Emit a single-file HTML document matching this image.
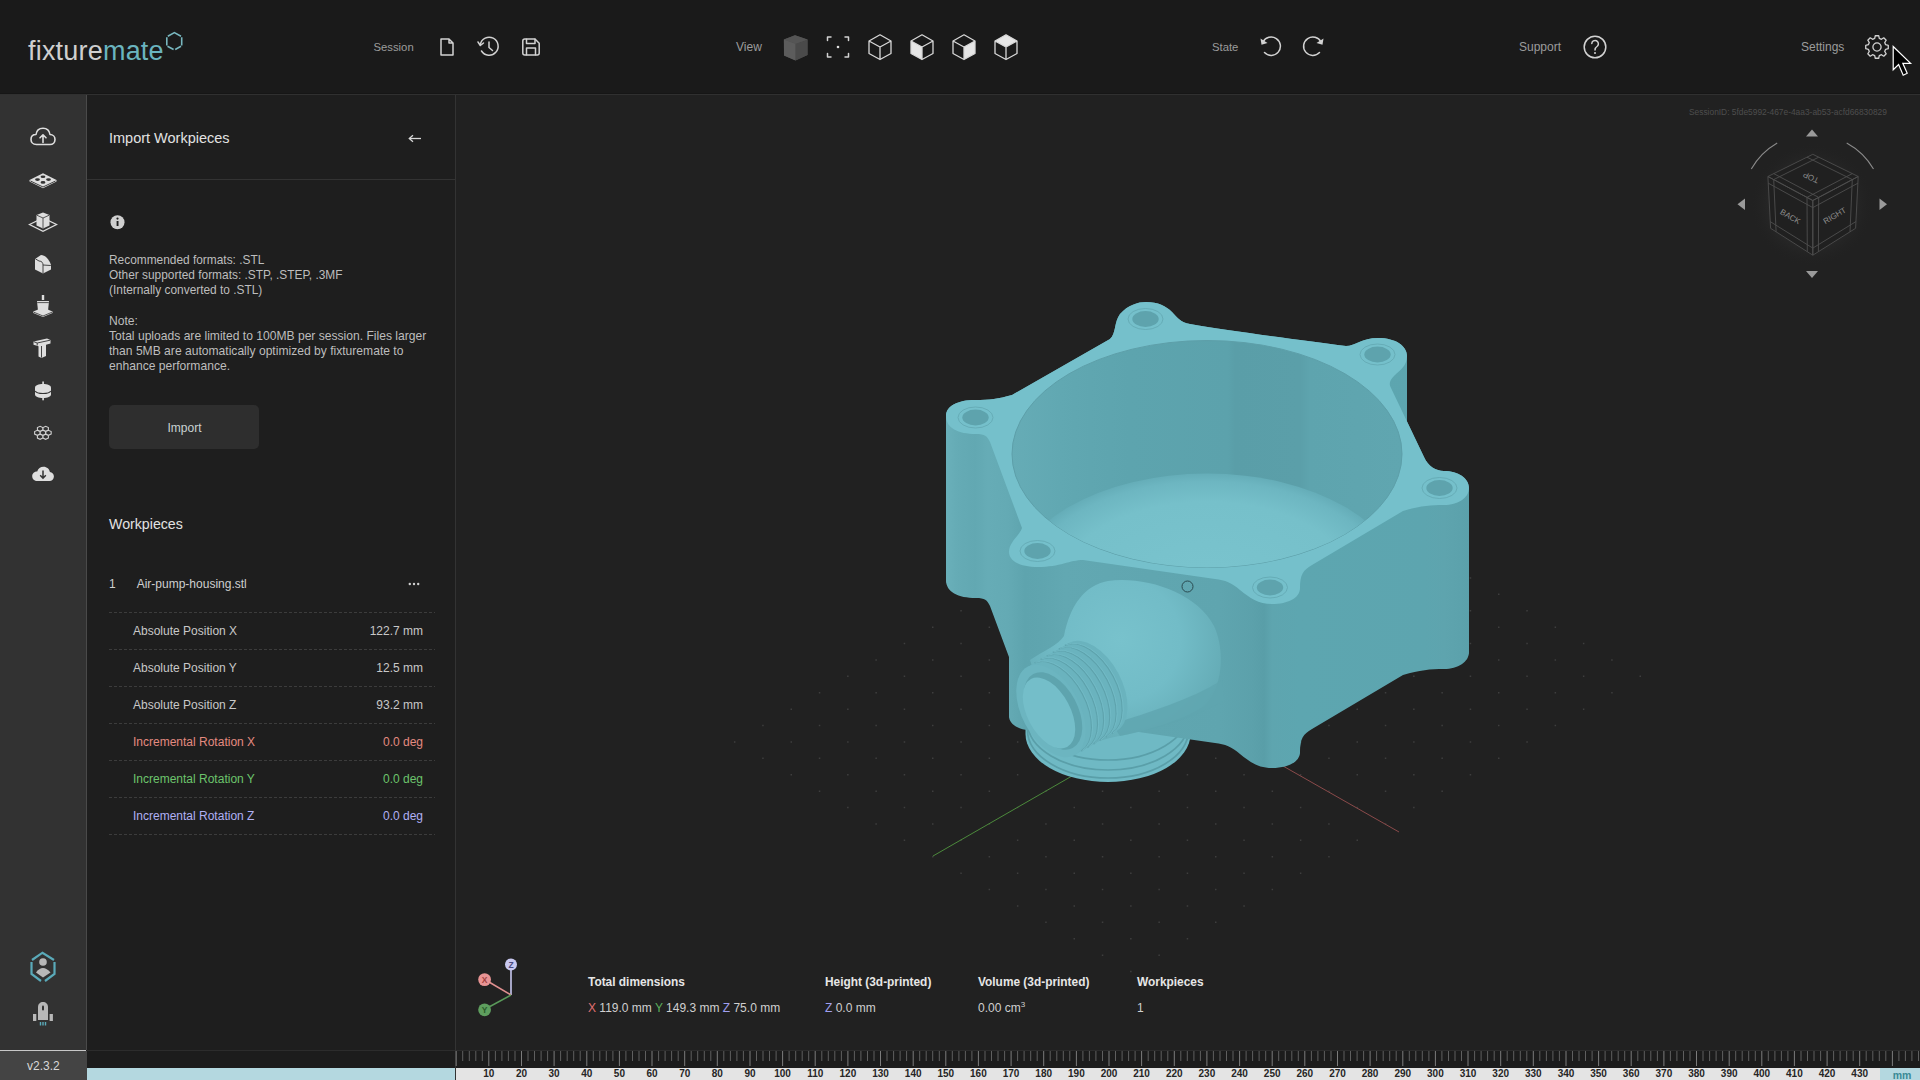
<!DOCTYPE html>
<html><head><meta charset="utf-8"><style>
*{margin:0;padding:0;box-sizing:border-box}
html,body{width:1920px;height:1080px;overflow:hidden;background:#212121;font-family:"Liberation Sans",sans-serif}
.t{position:absolute;white-space:nowrap}
.abs{position:absolute}
svg{position:absolute;overflow:visible}
</style></head>
<body>
<div class="abs" style="left:0;top:0;width:1920px;height:94px;background:#1a1a1a"></div><div class="abs" style="left:0;top:93px;width:1920px;height:1px;background:#161616"></div><div class="abs" style="left:0;top:94px;width:1920px;height:1px;background:#303030"></div><div class="abs" style="left:0;top:95px;width:86px;height:955px;background:#323232"></div><div class="abs" style="left:86px;top:95px;width:1px;height:955px;background:#4a4a4a"></div><div class="abs" style="left:0;top:1050px;width:86px;height:1px;background:#c8c8c8"></div><div class="abs" style="left:0;top:1051px;width:87px;height:29px;background:#444444"></div><div class="abs" style="left:87px;top:95px;width:368px;height:955px;background:#1e1e1e"></div><div class="abs" style="left:87px;top:179px;width:368px;height:1px;background:#333"></div><div class="abs" style="left:455px;top:95px;width:1px;height:985px;background:#333"></div><div class="abs" style="left:87px;top:1050px;width:368px;height:1px;background:#2c2c2c"></div><div class="abs" style="left:87px;top:1051px;width:368px;height:17px;background:#1c1c1c"></div><div class="abs" style="left:87px;top:1068px;width:368px;height:12px;background:#b4d8e0"></div><div class="abs" style="left:456px;top:1050px;width:1464px;height:1px;background:#2c2c2c"></div><div class="abs" style="left:456px;top:1051px;width:1464px;height:17px;background:#1c1c1c"></div><div class="abs" style="left:456px;top:1068px;width:1464px;height:12px;background:#e4e4e4"></div><svg style="left:0;top:0" width="1920" height="94" viewBox="0 0 1920 94">
<!-- logo hex -->
<path d="M167.8,36.3 L174.4,32.6 L181,36.3 M181.7,37.3 V45.4 M181,46.3 L175.2,49.5 M173.6,49.5 L167.5,46.3 M166.8,37.3 V45.4" fill="none" stroke="#78b7bf" stroke-width="1.6"/>
<g fill="none" stroke="#d2d2d2" stroke-width="1.5" stroke-linejoin="round" stroke-linecap="round">
 <!-- file -->
 <path d="M441,39 H449 L453,43 V55 H441 Z M449,39 V43 H453"/>
 <!-- history -->
 <path d="M480.3,44.5 A9,9 0 1 1 481.5,51"/>
 <path d="M478,42 L480.3,45.5 L483.5,43" />
 <path d="M489,42 V47.5 L492.5,50.5"/>
 <!-- save -->
 <path d="M522.8,41 A2,2 0 0 1 524.8,39 H535 L539.2,43.2 V53 A2,2 0 0 1 537.2,55 H524.8 A2,2 0 0 1 522.8,53 Z"/>
 <path d="M526.5,39.2 V43.5 H535 V39.2 M526.5,54.8 V48 H535.5 V54.8"/>
 <!-- focus -->
 <path d="M827.5,40.5 V37 H831 M845,37 H848.5 V40.5 M848.5,53.5 V57 H845 M831,57 H827.5 V53.5"/>
 <!-- undo -->
 <path d="M1263,42 A9.2,9.2 0 1 1 1264.5,52.5"/>
 <!-- redo -->
 <path d="M1321,42 A9.2,9.2 0 1 0 1319.5,52.5"/>
 <!-- help -->
 <circle cx="1595" cy="47" r="10.8"/>
 <path d="M1591.8,43.5 A3.3,3.3 0 1 1 1597.5,46 C1596,47 1595,48 1595,50"/>
</g>
<circle cx="838" cy="47" r="1.3" fill="#e0e0e0"/>
<circle cx="1595" cy="53" r="1" fill="#d2d2d2"/>
<path d="M1260.5,38.5 L1261.5,44.8 L1267.5,43 Z" fill="#d2d2d2"/>
<path d="M1323.5,38.5 L1322.5,44.8 L1316.5,43 Z" fill="#d2d2d2"/>
<!-- gray cube -->
<defs><linearGradient id="gc" x1="0" x2="0" y1="0" y2="1"><stop offset="0" stop-color="#5a5a5a"/><stop offset="1" stop-color="#4a4a4a"/></linearGradient></defs>
<path d="M795,35.2 L807.5,39.5 L807.5,55 L795.5,60.5 L784,55.5 L783.8,39.5 Z" fill="#505050"/>
<path d="M784,39.5 L795.5,43.8 L795.5,60.5 L784,55.5 Z" fill="#5c5c5c"/>
<path d="M795.5,43.8 L807.5,39.5 L807.5,55 L795.5,60.5 Z" fill="#4a4a4a"/>
<path d="M784,39.5 L795,35.2 L807.5,39.5 L795.5,43.8 Z" fill="#555"/>
<!-- wire cubes -->
<g fill="none" stroke="#d8d8d8" stroke-width="1.3" stroke-linejoin="round">
 <path d="M880,34.8 L891,41 V53.5 L880,59.5 L869,53.5 V41 Z M869,41 L880,47 L891,41 M880,47 V59.5"/>
</g>
<path d="M911,41 L922,47 V59.5 L911,53.5 Z" fill="#e6e6e6"/>
<g fill="none" stroke="#d8d8d8" stroke-width="1.3" stroke-linejoin="round">
 <path d="M922,34.8 L933,41 V53.5 L922,59.5 L911,53.5 V41 Z M911,41 L922,47 L933,41 M922,47 V59.5"/>
</g>
<path d="M975,41 L964,47 V59.5 L975,53.5 Z" fill="#e6e6e6"/>
<g fill="none" stroke="#d8d8d8" stroke-width="1.3" stroke-linejoin="round">
 <path d="M964,34.8 L975,41 V53.5 L964,59.5 L953,53.5 V41 Z M953,41 L964,47 L975,41 M964,47 V59.5"/>
</g>
<path d="M995,41 L1006,34.8 L1017,41 L1006,47 Z" fill="#e6e6e6"/>
<g fill="none" stroke="#d8d8d8" stroke-width="1.3" stroke-linejoin="round">
 <path d="M1006,34.8 L1017,41 V53.5 L1006,59.5 L995,53.5 V41 Z M995,41 L1006,47 L1017,41 M1006,47 V59.5"/>
</g>
<!-- gear -->
<g transform="translate(1877,47)">
 <path id="gear" fill="none" stroke="#d2d2d2" stroke-width="1.3" stroke-linejoin="round" d="M8.60,-2.29 L11.27,-1.70 L11.27,1.70 L8.60,2.29 L7.70,4.46 L9.18,6.77 L6.77,9.18 L4.46,7.70 L2.29,8.60 L1.70,11.27 L-1.70,11.27 L-2.29,8.60 L-4.46,7.70 L-6.77,9.18 L-9.18,6.77 L-7.70,4.46 L-8.60,2.29 L-11.27,1.70 L-11.27,-1.70 L-8.60,-2.29 L-7.70,-4.46 L-9.18,-6.77 L-6.77,-9.18 L-4.46,-7.70 L-2.29,-8.60 L-1.70,-11.27 L1.70,-11.27 L2.29,-8.60 L4.46,-7.70 L6.77,-9.18 L9.18,-6.77 L7.70,-4.46 Z"/>
 <circle r="4.1" fill="none" stroke="#d2d2d2" stroke-width="1.3"/>
</g>
<!-- cursor -->
<path d="M1893.2,46.5 L1893.2,69.8 L1898.6,64.6 L1903.2,75.2 L1907.2,73.3 L1902.8,63.3 L1910.6,63.3 Z" fill="#000" stroke="#fff" stroke-width="1.2" stroke-linejoin="miter"/>
</svg>
<svg style="left:0;top:95px" width="86" height="955" viewBox="0 95 86 955">
<g fill="none" stroke="#dedede" stroke-width="1.6" stroke-linejoin="round" stroke-linecap="round">
 <!-- cloud upload -->
 <path d="M36.5,144.5 C32.5,144.5 31,141.5 31,139.5 C31,136.5 33,134.5 36,134.5 C36.5,130.5 39.5,128.2 43,128.2 C47,128.2 49.5,131 50,134.5 C53,134.5 55,136.8 55,139.5 C55,142.5 52.8,144.5 50,144.5 Z"/>
 <path d="M43,142.5 V135 M40,137.8 L43,134.8 L46,137.8"/>
</g>
<g fill="#dedede">
 <!-- plate with holes -->
 <path d="M29.5,180 L43,173.3 L56.5,180 L56.5,181.5 L43,188.3 L29.5,181.5 Z"/>
 <path d="M30.5,181 L43,187 L55.5,181" fill="none" stroke="#323232" stroke-width="0.9"/>
 <ellipse cx="37.5" cy="179.6" rx="2.4" ry="1.3" fill="#323232"/>
 <ellipse cx="48.5" cy="179.6" rx="2.4" ry="1.3" fill="#323232"/>
 <ellipse cx="43" cy="176.8" rx="2.4" ry="1.3" fill="#323232"/>
 <ellipse cx="43" cy="182.4" rx="2.4" ry="1.3" fill="#323232"/>
 <!-- cube on plate -->
 <path d="M29.5,224.5 L43,218 L56.5,224.5 L43,231.3 Z" fill="none" stroke="#dedede" stroke-width="1.3"/>
 <path d="M36.5,215 L43,212.5 L49.5,215 L49.5,225.5 L43,228.5 L36.5,225.5 Z"/>
 <path d="M36.8,215.2 L43,218 L49.2,215.2 M43,218 V228" fill="none" stroke="#323232" stroke-width="0.8"/>
 <!-- wedge -->
 <path d="M35,259 L41,255 C45,255 49,259 51,265 L51,269.5 L43,273.5 L35,269.5 Z"/>
 <path d="M35.3,258.8 L39,261 C42,261 43,263 43,265 V273.3 M43,265 L50.8,265.5" fill="none" stroke="#323232" stroke-width="0.9"/>
 <!-- cup on plate -->
 <rect x="41.8" y="295" width="2.4" height="5"/>
 <path d="M37,301 H49 L48,311 H38 Z"/>
 <path d="M37.2,302.6 H48.8" stroke="#323232" stroke-width="0.8"/>
 <path d="M33.3,311.5 L43,307.5 L52.5,311.5 L52.5,313 L43,317 L33.3,313 Z"/>
 <path d="M33.8,312.2 L43,316 L52,312.2" fill="none" stroke="#323232" stroke-width="0.8"/>
 <!-- T beam -->
 <path d="M33.5,341.5 L47,338.5 L50.5,340 L50.5,343.5 L46,344.8 L46,356 L41.5,358 L38.5,356.5 L38.5,346.3 L33.5,344.8 Z"/>
 <path d="M33.8,341.7 L37.2,343 L50.2,340.2 M37.2,343 V345.5 M41.5,346 V357.6" fill="none" stroke="#323232" stroke-width="0.9"/>
 <!-- disc with axis -->
 <rect x="42.3" y="381.5" width="1.6" height="2.8"/>
 <rect x="42.3" y="397.5" width="1.6" height="2.8"/>
 <path d="M35,387.5 C35,385.5 38.5,384 43,384 C47.5,384 51,385.5 51,387.5 V394.5 C51,396.5 47.5,398 43,398 C38.5,398 35,396.5 35,394.5 Z"/>
 <path d="M35.3,391 C36,392.5 39,393.5 43,393.5 C47,393.5 50,392.5 50.7,391" fill="none" stroke="#323232" stroke-width="1.1"/>
 <!-- cloud download filled -->
 <path d="M37.5,481 C34.5,481 32.2,479 32.2,476.2 C32.2,473.4 34.5,471.6 37.2,471.6 C38,468.5 40.5,466.7 43.5,466.7 C47,466.7 49.4,469 49.9,472 C52.2,472.2 53.9,474 53.9,476.5 C53.9,479 52,481 49.5,481 Z"/>
 <path d="M43,470.5 V478 M40.2,475.3 L43,478.2 L45.8,475.3" fill="none" stroke="#323232" stroke-width="1.5"/>
</g>
<!-- honeycomb -->
<g fill="none" stroke="#cfcfcf" stroke-width="1.1"><path d="M45.58,434.07 L42.90,435.34 L40.22,434.07 L40.22,431.53 L42.90,430.26 L45.58,431.53Z M51.18,434.07 L48.50,435.34 L45.82,434.07 L45.82,431.53 L48.50,430.26 L51.18,431.53Z M48.38,438.05 L45.70,439.32 L43.02,438.05 L43.02,435.51 L45.70,434.23 L48.38,435.51Z M42.78,438.05 L40.10,439.32 L37.42,438.05 L37.42,435.51 L40.10,434.23 L42.78,435.51Z M39.98,434.07 L37.30,435.34 L34.62,434.07 L34.62,431.53 L37.30,430.26 L39.98,431.53Z M42.78,430.09 L40.10,431.37 L37.42,430.09 L37.42,427.55 L40.10,426.28 L42.78,427.55Z M48.38,430.09 L45.70,431.37 L43.02,430.09 L43.02,427.55 L45.70,426.28 L48.38,427.55Z"/></g>
<!-- user hex -->
<g fill="none" stroke="#5aaab9" stroke-width="2.2">
 <path d="M32,960 L42.5,952.7 L54,960"/>
 <path d="M54.5,962 V974 L45,981"/>
 <path d="M41,981 L31.5,974 V962"/>
</g>
<circle cx="43" cy="962" r="3.8" fill="#b8b8b8"/>
<path d="M36,972.5 C38,969.5 40.5,968 43,968 C45.5,968 48,969.5 50.5,972.5 L43,977.5 Z" fill="#b8b8b8"/>
<!-- rocket -->
<path d="M38,1007 C38,1004 40.2,1002 43,1002 C45.8,1002 48,1004 48,1007 V1020 H38 Z" fill="#b8b8b8"/>
<rect x="42" y="1005.5" width="2" height="5" rx="1" fill="#323232"/>
<rect x="33" y="1014" width="3.3" height="7" fill="#b8b8b8"/>
<rect x="49.6" y="1014" width="3.3" height="7" fill="#b8b8b8"/>
<rect x="39.8" y="1022" width="1.4" height="3.5" fill="#5aaab9"/>
<rect x="42.3" y="1022" width="1.4" height="3.5" fill="#5aaab9"/>
<rect x="44.8" y="1022" width="1.4" height="3.5" fill="#5aaab9"/>
</svg>
<svg style="left:87px;top:95px" width="368" height="955" viewBox="87 95 368 955">
<circle cx="117.5" cy="222.2" r="7" fill="#cfcfcf"/>
<rect x="116.6" y="221" width="1.9" height="5" fill="#1e1e1e"/>
<circle cx="117.5" cy="218.6" r="1.1" fill="#1e1e1e"/>
<path d="M409.5,138.5 H421" stroke="#d8d8d8" stroke-width="1.3"/>
<path d="M413,135.3 L409.3,138.5 L413,141.7" stroke="#d8d8d8" stroke-width="1.3" fill="none"/>
<circle cx="409.8" cy="584" r="1.2" fill="#cfcfcf"/>
<circle cx="414" cy="584" r="1.2" fill="#cfcfcf"/>
<circle cx="418.2" cy="584" r="1.2" fill="#cfcfcf"/>
</svg>
<svg style="left:456px;top:95px" width="1464" height="955" viewBox="456 95 1464 955">
<defs>
<pattern id="dots" x="0" y="0" width="28.3" height="32.6" patternUnits="userSpaceOnUse">
<rect x="0" y="0" width="1.2" height="1.2" fill="#3a3a3a"/>
<rect x="14.15" y="16.3" width="1.2" height="1.2" fill="#3a3a3a"/>
</pattern>
</defs>
<path d="M733.9,741.2h1.5v1.5h-1.5zM762.2,724.8h1.5v1.5h-1.5zM790.5,708.4h1.5v1.5h-1.5zM818.8,692.0h1.5v1.5h-1.5zM847.1,675.6h1.5v1.5h-1.5zM875.4,659.2h1.5v1.5h-1.5zM903.7,642.8h1.5v1.5h-1.5zM932.0,626.4h1.5v1.5h-1.5zM960.3,610.0h1.5v1.5h-1.5zM988.6,593.6h1.5v1.5h-1.5zM1016.9,577.2h1.5v1.5h-1.5zM1045.2,560.8h1.5v1.5h-1.5zM1073.5,544.4h1.5v1.5h-1.5zM1101.8,528.0h1.5v1.5h-1.5zM1130.1,511.6h1.5v1.5h-1.5zM1158.4,495.2h1.5v1.5h-1.5zM1186.7,478.8h1.5v1.5h-1.5zM1215.0,462.4h1.5v1.5h-1.5zM1243.3,446.0h1.5v1.5h-1.5zM762.2,757.6h1.5v1.5h-1.5zM790.5,741.2h1.5v1.5h-1.5zM818.8,724.8h1.5v1.5h-1.5zM847.1,708.4h1.5v1.5h-1.5zM875.4,692.0h1.5v1.5h-1.5zM903.7,675.6h1.5v1.5h-1.5zM932.0,659.2h1.5v1.5h-1.5zM960.3,642.8h1.5v1.5h-1.5zM988.6,626.4h1.5v1.5h-1.5zM1016.9,610.0h1.5v1.5h-1.5zM1045.2,593.6h1.5v1.5h-1.5zM1073.5,577.2h1.5v1.5h-1.5zM1101.8,560.8h1.5v1.5h-1.5zM1130.1,544.4h1.5v1.5h-1.5zM1158.4,528.0h1.5v1.5h-1.5zM1186.7,511.6h1.5v1.5h-1.5zM1215.0,495.2h1.5v1.5h-1.5zM1243.3,478.8h1.5v1.5h-1.5zM1271.6,462.4h1.5v1.5h-1.5zM790.5,774.0h1.5v1.5h-1.5zM818.8,757.6h1.5v1.5h-1.5zM847.1,741.2h1.5v1.5h-1.5zM875.4,724.8h1.5v1.5h-1.5zM903.7,708.4h1.5v1.5h-1.5zM932.0,692.0h1.5v1.5h-1.5zM960.3,675.6h1.5v1.5h-1.5zM988.6,659.2h1.5v1.5h-1.5zM1016.9,642.8h1.5v1.5h-1.5zM1045.2,626.4h1.5v1.5h-1.5zM1073.5,610.0h1.5v1.5h-1.5zM1101.8,593.6h1.5v1.5h-1.5zM1130.1,577.2h1.5v1.5h-1.5zM1158.4,560.8h1.5v1.5h-1.5zM1186.7,544.4h1.5v1.5h-1.5zM1215.0,528.0h1.5v1.5h-1.5zM1243.3,511.6h1.5v1.5h-1.5zM1271.6,495.2h1.5v1.5h-1.5zM1299.9,478.8h1.5v1.5h-1.5zM818.8,790.4h1.5v1.5h-1.5zM847.1,774.0h1.5v1.5h-1.5zM875.4,757.6h1.5v1.5h-1.5zM903.7,741.2h1.5v1.5h-1.5zM932.0,724.8h1.5v1.5h-1.5zM960.3,708.4h1.5v1.5h-1.5zM988.6,692.0h1.5v1.5h-1.5zM1016.9,675.6h1.5v1.5h-1.5zM1045.2,659.2h1.5v1.5h-1.5zM1073.5,642.8h1.5v1.5h-1.5zM1101.8,626.4h1.5v1.5h-1.5zM1130.1,610.0h1.5v1.5h-1.5zM1158.4,593.6h1.5v1.5h-1.5zM1186.7,577.2h1.5v1.5h-1.5zM1215.0,560.8h1.5v1.5h-1.5zM1243.3,544.4h1.5v1.5h-1.5zM1271.6,528.0h1.5v1.5h-1.5zM1299.9,511.6h1.5v1.5h-1.5zM1328.2,495.2h1.5v1.5h-1.5zM847.1,806.8h1.5v1.5h-1.5zM875.4,790.4h1.5v1.5h-1.5zM903.7,774.0h1.5v1.5h-1.5zM932.0,757.6h1.5v1.5h-1.5zM960.3,741.2h1.5v1.5h-1.5zM988.6,724.8h1.5v1.5h-1.5zM1016.9,708.4h1.5v1.5h-1.5zM1045.2,692.0h1.5v1.5h-1.5zM1073.5,675.6h1.5v1.5h-1.5zM1101.8,659.2h1.5v1.5h-1.5zM1130.1,642.8h1.5v1.5h-1.5zM1158.4,626.4h1.5v1.5h-1.5zM1186.7,610.0h1.5v1.5h-1.5zM1215.0,593.6h1.5v1.5h-1.5zM1243.3,577.2h1.5v1.5h-1.5zM1271.6,560.8h1.5v1.5h-1.5zM1299.9,544.4h1.5v1.5h-1.5zM1328.2,528.0h1.5v1.5h-1.5zM1356.5,511.6h1.5v1.5h-1.5zM875.4,823.2h1.5v1.5h-1.5zM903.7,806.8h1.5v1.5h-1.5zM932.0,790.4h1.5v1.5h-1.5zM960.3,774.0h1.5v1.5h-1.5zM988.6,757.6h1.5v1.5h-1.5zM1016.9,741.2h1.5v1.5h-1.5zM1045.2,724.8h1.5v1.5h-1.5zM1073.5,708.4h1.5v1.5h-1.5zM1101.8,692.0h1.5v1.5h-1.5zM1130.1,675.6h1.5v1.5h-1.5zM1158.4,659.2h1.5v1.5h-1.5zM1186.7,642.8h1.5v1.5h-1.5zM1215.0,626.4h1.5v1.5h-1.5zM1243.3,610.0h1.5v1.5h-1.5zM1271.6,593.6h1.5v1.5h-1.5zM1299.9,577.2h1.5v1.5h-1.5zM1328.2,560.8h1.5v1.5h-1.5zM1356.5,544.4h1.5v1.5h-1.5zM1384.8,528.0h1.5v1.5h-1.5zM903.7,839.6h1.5v1.5h-1.5zM932.0,823.2h1.5v1.5h-1.5zM960.3,806.8h1.5v1.5h-1.5zM988.6,790.4h1.5v1.5h-1.5zM1016.9,774.0h1.5v1.5h-1.5zM1045.2,757.6h1.5v1.5h-1.5zM1073.5,741.2h1.5v1.5h-1.5zM1101.8,724.8h1.5v1.5h-1.5zM1130.1,708.4h1.5v1.5h-1.5zM1158.4,692.0h1.5v1.5h-1.5zM1186.7,675.6h1.5v1.5h-1.5zM1215.0,659.2h1.5v1.5h-1.5zM1243.3,642.8h1.5v1.5h-1.5zM1271.6,626.4h1.5v1.5h-1.5zM1299.9,610.0h1.5v1.5h-1.5zM1328.2,593.6h1.5v1.5h-1.5zM1356.5,577.2h1.5v1.5h-1.5zM1384.8,560.8h1.5v1.5h-1.5zM1413.1,544.4h1.5v1.5h-1.5zM932.0,856.0h1.5v1.5h-1.5zM960.3,839.6h1.5v1.5h-1.5zM988.6,823.2h1.5v1.5h-1.5zM1016.9,806.8h1.5v1.5h-1.5zM1045.2,790.4h1.5v1.5h-1.5zM1073.5,774.0h1.5v1.5h-1.5zM1101.8,757.6h1.5v1.5h-1.5zM1130.1,741.2h1.5v1.5h-1.5zM1158.4,724.8h1.5v1.5h-1.5zM1186.7,708.4h1.5v1.5h-1.5zM1215.0,692.0h1.5v1.5h-1.5zM1243.3,675.6h1.5v1.5h-1.5zM1271.6,659.2h1.5v1.5h-1.5zM1299.9,642.8h1.5v1.5h-1.5zM1328.2,626.4h1.5v1.5h-1.5zM1356.5,610.0h1.5v1.5h-1.5zM1384.8,593.6h1.5v1.5h-1.5zM1413.1,577.2h1.5v1.5h-1.5zM1441.4,560.8h1.5v1.5h-1.5zM960.3,872.4h1.5v1.5h-1.5zM988.6,856.0h1.5v1.5h-1.5zM1016.9,839.6h1.5v1.5h-1.5zM1045.2,823.2h1.5v1.5h-1.5zM1073.5,806.8h1.5v1.5h-1.5zM1101.8,790.4h1.5v1.5h-1.5zM1130.1,774.0h1.5v1.5h-1.5zM1158.4,757.6h1.5v1.5h-1.5zM1186.7,741.2h1.5v1.5h-1.5zM1215.0,724.8h1.5v1.5h-1.5zM1243.3,708.4h1.5v1.5h-1.5zM1271.6,692.0h1.5v1.5h-1.5zM1299.9,675.6h1.5v1.5h-1.5zM1328.2,659.2h1.5v1.5h-1.5zM1356.5,642.8h1.5v1.5h-1.5zM1384.8,626.4h1.5v1.5h-1.5zM1413.1,610.0h1.5v1.5h-1.5zM1441.4,593.6h1.5v1.5h-1.5zM1469.7,577.2h1.5v1.5h-1.5zM988.6,888.8h1.5v1.5h-1.5zM1016.9,872.4h1.5v1.5h-1.5zM1045.2,856.0h1.5v1.5h-1.5zM1073.5,839.6h1.5v1.5h-1.5zM1101.8,823.2h1.5v1.5h-1.5zM1130.1,806.8h1.5v1.5h-1.5zM1158.4,790.4h1.5v1.5h-1.5zM1186.7,774.0h1.5v1.5h-1.5zM1215.0,757.6h1.5v1.5h-1.5zM1243.3,741.2h1.5v1.5h-1.5zM1271.6,724.8h1.5v1.5h-1.5zM1299.9,708.4h1.5v1.5h-1.5zM1328.2,692.0h1.5v1.5h-1.5zM1356.5,675.6h1.5v1.5h-1.5zM1384.8,659.2h1.5v1.5h-1.5zM1413.1,642.8h1.5v1.5h-1.5zM1441.4,626.4h1.5v1.5h-1.5zM1469.7,610.0h1.5v1.5h-1.5zM1498.0,593.6h1.5v1.5h-1.5zM1016.9,905.2h1.5v1.5h-1.5zM1045.2,888.8h1.5v1.5h-1.5zM1073.5,872.4h1.5v1.5h-1.5zM1101.8,856.0h1.5v1.5h-1.5zM1130.1,839.6h1.5v1.5h-1.5zM1158.4,823.2h1.5v1.5h-1.5zM1186.7,806.8h1.5v1.5h-1.5zM1215.0,790.4h1.5v1.5h-1.5zM1243.3,774.0h1.5v1.5h-1.5zM1271.6,757.6h1.5v1.5h-1.5zM1299.9,741.2h1.5v1.5h-1.5zM1328.2,724.8h1.5v1.5h-1.5zM1356.5,708.4h1.5v1.5h-1.5zM1384.8,692.0h1.5v1.5h-1.5zM1413.1,675.6h1.5v1.5h-1.5zM1441.4,659.2h1.5v1.5h-1.5zM1469.7,642.8h1.5v1.5h-1.5zM1498.0,626.4h1.5v1.5h-1.5zM1526.3,610.0h1.5v1.5h-1.5zM1045.2,921.6h1.5v1.5h-1.5zM1073.5,905.2h1.5v1.5h-1.5zM1101.8,888.8h1.5v1.5h-1.5zM1130.1,872.4h1.5v1.5h-1.5zM1158.4,856.0h1.5v1.5h-1.5zM1186.7,839.6h1.5v1.5h-1.5zM1215.0,823.2h1.5v1.5h-1.5zM1243.3,806.8h1.5v1.5h-1.5zM1271.6,790.4h1.5v1.5h-1.5zM1299.9,774.0h1.5v1.5h-1.5zM1328.2,757.6h1.5v1.5h-1.5zM1356.5,741.2h1.5v1.5h-1.5zM1384.8,724.8h1.5v1.5h-1.5zM1413.1,708.4h1.5v1.5h-1.5zM1441.4,692.0h1.5v1.5h-1.5zM1469.7,675.6h1.5v1.5h-1.5zM1498.0,659.2h1.5v1.5h-1.5zM1526.3,642.8h1.5v1.5h-1.5zM1554.6,626.4h1.5v1.5h-1.5zM1073.5,938.0h1.5v1.5h-1.5zM1101.8,921.6h1.5v1.5h-1.5zM1130.1,905.2h1.5v1.5h-1.5zM1158.4,888.8h1.5v1.5h-1.5zM1186.7,872.4h1.5v1.5h-1.5zM1215.0,856.0h1.5v1.5h-1.5zM1243.3,839.6h1.5v1.5h-1.5zM1271.6,823.2h1.5v1.5h-1.5zM1299.9,806.8h1.5v1.5h-1.5zM1328.2,790.4h1.5v1.5h-1.5zM1356.5,774.0h1.5v1.5h-1.5zM1384.8,757.6h1.5v1.5h-1.5zM1413.1,741.2h1.5v1.5h-1.5zM1441.4,724.8h1.5v1.5h-1.5zM1469.7,708.4h1.5v1.5h-1.5zM1498.0,692.0h1.5v1.5h-1.5zM1526.3,675.6h1.5v1.5h-1.5zM1554.6,659.2h1.5v1.5h-1.5zM1582.9,642.8h1.5v1.5h-1.5zM1101.8,954.4h1.5v1.5h-1.5zM1130.1,938.0h1.5v1.5h-1.5zM1158.4,921.6h1.5v1.5h-1.5zM1186.7,905.2h1.5v1.5h-1.5zM1215.0,888.8h1.5v1.5h-1.5zM1243.3,872.4h1.5v1.5h-1.5zM1271.6,856.0h1.5v1.5h-1.5zM1299.9,839.6h1.5v1.5h-1.5zM1328.2,823.2h1.5v1.5h-1.5zM1356.5,806.8h1.5v1.5h-1.5zM1384.8,790.4h1.5v1.5h-1.5zM1413.1,774.0h1.5v1.5h-1.5zM1441.4,757.6h1.5v1.5h-1.5zM1469.7,741.2h1.5v1.5h-1.5zM1498.0,724.8h1.5v1.5h-1.5zM1526.3,708.4h1.5v1.5h-1.5zM1554.6,692.0h1.5v1.5h-1.5zM1582.9,675.6h1.5v1.5h-1.5zM1611.2,659.2h1.5v1.5h-1.5zM1130.1,970.8h1.5v1.5h-1.5zM1158.4,954.4h1.5v1.5h-1.5zM1186.7,938.0h1.5v1.5h-1.5zM1215.0,921.6h1.5v1.5h-1.5zM1243.3,905.2h1.5v1.5h-1.5zM1271.6,888.8h1.5v1.5h-1.5zM1299.9,872.4h1.5v1.5h-1.5zM1328.2,856.0h1.5v1.5h-1.5zM1356.5,839.6h1.5v1.5h-1.5zM1384.8,823.2h1.5v1.5h-1.5zM1413.1,806.8h1.5v1.5h-1.5zM1441.4,790.4h1.5v1.5h-1.5zM1469.7,774.0h1.5v1.5h-1.5zM1498.0,757.6h1.5v1.5h-1.5zM1526.3,741.2h1.5v1.5h-1.5zM1554.6,724.8h1.5v1.5h-1.5zM1582.9,708.4h1.5v1.5h-1.5zM1611.2,692.0h1.5v1.5h-1.5zM1639.5,675.6h1.5v1.5h-1.5z" fill="#3e3e3e"/>
<!-- axis lines -->
<path d="M933,856 L1072,776" stroke="#4c8a3c" stroke-width="1"/>
<path d="M1283,766 L1399,832" stroke="#8a4a4a" stroke-width="1"/>
<!-- gizmo -->
<g stroke-width="1.6">
<path d="M511,995 V970" stroke="#c8c8f0"/>
<path d="M511,995 L489,982" stroke="#e09090"/>
<path d="M511,995 L489,1007" stroke="#5a9a5a"/>
</g>
<circle cx="511" cy="964.5" r="6" fill="#c8c8f0"/>
<circle cx="484.6" cy="979.6" r="6.4" fill="#e89494"/>
<circle cx="484.6" cy="1009.8" r="6.4" fill="#5e9e5e"/>
<g font-family="Liberation Sans" font-size="8.5" font-weight="700" text-anchor="middle">
<text x="511" y="967.6" fill="#4a4a80">Z</text>
<text x="484.6" y="982.7" fill="#a04040">X</text>
<text x="484.6" y="1012.9" fill="#2a5a2a">Y</text>
</g>
</svg>
<svg style="left:0;top:0" width="1920" height="1080" viewBox="0 0 1920 1080">
<defs>
<path id="tf" d="M946,416 C946,406 958,400 975,400 C990,400 998,399 1012,395 L1110,339 C1116,334 1114,322 1120,314 C1128,305 1138,302 1146,302 C1158,302 1166,306 1172,312 C1178,318 1180,322 1190,324 C1230,331 1300,340 1346,346 C1355,346 1362,338 1378,338 C1396,338 1407,346 1407,356 C1407,366 1400,370 1394,376 C1389,381 1389,385 1391,388 L1424,457 C1428,466 1436,471 1444,471 C1458,471 1469,478 1469,488 C1469,498 1458,505 1444,505 C1430,505 1420,506 1403,511 L1312,565 C1303,570 1300,575 1300,588 C1300,598 1288,604 1272,604 C1258,604 1250,598 1240,590 C1232,583 1225,580 1215,579 L1083,560 C1070,560 1060,567 1038,567 C1020,567 1009,561 1009,552 C1009,542 1020,535 1022,528 L990,442 C987,436 985,434 976,434 C958,434 946,428 946,416 Z"/>
<linearGradient id="gside" x1="946" x2="1469" y1="0" y2="0" gradientUnits="userSpaceOnUse"><stop offset="0.0000" stop-color="#6ab0ba"/><stop offset="0.0229" stop-color="#65abb5"/><stop offset="0.0554" stop-color="#62a8b2"/><stop offset="0.0803" stop-color="#66acb6"/><stop offset="0.1185" stop-color="#64aab4"/><stop offset="0.1511" stop-color="#5ea4ae"/><stop offset="0.1836" stop-color="#5fa5af"/><stop offset="0.2275" stop-color="#62a8b2"/><stop offset="0.3901" stop-color="#60a6b0"/><stop offset="0.5239" stop-color="#5fa5af"/><stop offset="0.5851" stop-color="#5ca1ab"/><stop offset="0.6080" stop-color="#599ea8"/><stop offset="0.6233" stop-color="#5ea5af"/><stop offset="0.6769" stop-color="#5da6b0"/><stop offset="0.9159" stop-color="#5da5af"/><stop offset="0.9541" stop-color="#5ea4ae"/><stop offset="1.0000" stop-color="#5ba1ab"/></linearGradient>
<linearGradient id="gwall" x1="1012" x2="1402" y1="0" y2="0" gradientUnits="userSpaceOnUse"><stop offset="0.0000" stop-color="#66acb6"/><stop offset="0.1231" stop-color="#61a8b2"/><stop offset="0.2000" stop-color="#5fa6b0"/><stop offset="0.3026" stop-color="#5da4ae"/><stop offset="0.5538" stop-color="#5ca2ac"/><stop offset="0.5718" stop-color="#5a9ea8"/><stop offset="0.7385" stop-color="#5b9fa9"/><stop offset="0.7641" stop-color="#5ea4ae"/><stop offset="1.0000" stop-color="#60a6b0"/></linearGradient>
<radialGradient id="gfloor" cx="1207" cy="587" r="195" gradientUnits="userSpaceOnUse" gradientTransform="translate(0,587) scale(1,0.582) translate(0,-587)"><stop offset="0" stop-color="#7ac4ce"/><stop offset="0.75" stop-color="#76c0ca"/><stop offset="0.93" stop-color="#6db6c1"/><stop offset="1" stop-color="#65adb8"/></radialGradient>
<radialGradient id="gdome" cx="1140" cy="630" r="90" gradientUnits="userSpaceOnUse"><stop offset="0" stop-color="#77c1cb"/><stop offset="0.6" stop-color="#6fb9c3"/><stop offset="1" stop-color="#62a9b3"/></radialGradient>
<clipPath id="rim"><ellipse cx="1207" cy="454" rx="195" ry="113.5"/></clipPath>
</defs>
<path d="M1025.5,690 L1025.5,734 A82.5,48 0 0 0 1190.5,734 L1190.5,690 Z" fill="#6fb9c4"/>
<path d="M1027.5,712 A80.5,48 0 0 0 1188.5,712" fill="none" stroke="#5a9fa9" stroke-width="1.7"/>
<path d="M1027.5,722 A80.5,48 0 0 0 1188.5,722" fill="none" stroke="#5a9fa9" stroke-width="1.7"/>
<path d="M1027.5,730 A80.5,48 0 0 0 1188.5,730" fill="none" stroke="#5a9fa9" stroke-width="1.7"/>
<g fill="url(#gside)">
<use href="#tf" y="0"/>
<use href="#tf" y="2"/>
<use href="#tf" y="4"/>
<use href="#tf" y="6"/>
<use href="#tf" y="8"/>
<use href="#tf" y="10"/>
<use href="#tf" y="12"/>
<use href="#tf" y="14"/>
<use href="#tf" y="16"/>
<use href="#tf" y="18"/>
<use href="#tf" y="20"/>
<use href="#tf" y="22"/>
<use href="#tf" y="24"/>
<use href="#tf" y="26"/>
<use href="#tf" y="28"/>
<use href="#tf" y="30"/>
<use href="#tf" y="32"/>
<use href="#tf" y="34"/>
<use href="#tf" y="36"/>
<use href="#tf" y="38"/>
<use href="#tf" y="40"/>
<use href="#tf" y="42"/>
<use href="#tf" y="44"/>
<use href="#tf" y="46"/>
<use href="#tf" y="48"/>
<use href="#tf" y="50"/>
<use href="#tf" y="52"/>
<use href="#tf" y="54"/>
<use href="#tf" y="56"/>
<use href="#tf" y="58"/>
<use href="#tf" y="60"/>
<use href="#tf" y="62"/>
<use href="#tf" y="64"/>
<use href="#tf" y="66"/>
<use href="#tf" y="68"/>
<use href="#tf" y="70"/>
<use href="#tf" y="72"/>
<use href="#tf" y="74"/>
<use href="#tf" y="76"/>
<use href="#tf" y="78"/>
<use href="#tf" y="80"/>
<use href="#tf" y="82"/>
<use href="#tf" y="84"/>
<use href="#tf" y="86"/>
<use href="#tf" y="88"/>
<use href="#tf" y="90"/>
<use href="#tf" y="92"/>
<use href="#tf" y="94"/>
<use href="#tf" y="96"/>
<use href="#tf" y="98"/>
<use href="#tf" y="100"/>
<use href="#tf" y="102"/>
<use href="#tf" y="104"/>
<use href="#tf" y="106"/>
<use href="#tf" y="108"/>
<use href="#tf" y="110"/>
<use href="#tf" y="112"/>
<use href="#tf" y="114"/>
<use href="#tf" y="116"/>
<use href="#tf" y="118"/>
<use href="#tf" y="120"/>
<use href="#tf" y="122"/>
<use href="#tf" y="124"/>
<use href="#tf" y="126"/>
<use href="#tf" y="128"/>
<use href="#tf" y="130"/>
<use href="#tf" y="132"/>
<use href="#tf" y="134"/>
<use href="#tf" y="136"/>
<use href="#tf" y="138"/>
<use href="#tf" y="140"/>
<use href="#tf" y="142"/>
<use href="#tf" y="144"/>
<use href="#tf" y="146"/>
<use href="#tf" y="148"/>
<use href="#tf" y="150"/>
<use href="#tf" y="152"/>
<use href="#tf" y="154"/>
<use href="#tf" y="156"/>
<use href="#tf" y="158"/>
<use href="#tf" y="160"/>
<use href="#tf" y="162"/>
<use href="#tf" y="164"/>
</g>
<use href="#tf" fill="#75c0cb"/>
<ellipse cx="1207" cy="454" rx="195" ry="113.5" fill="url(#gwall)" stroke="#5d9fa9" stroke-width="1"/>
<g clip-path="url(#rim)"><ellipse cx="1207" cy="587" rx="195" ry="113.5" fill="url(#gfloor)"/></g>
<ellipse cx="975.5" cy="417.5" rx="17.5" ry="10.5" fill="none" stroke="#62a7b1" stroke-width="0.8"/>
<ellipse cx="975.5" cy="417.5" rx="13.2" ry="7.9" fill="#5ea3ad"/>
<ellipse cx="1145.5" cy="319" rx="17.5" ry="10.5" fill="none" stroke="#62a7b1" stroke-width="0.8"/>
<ellipse cx="1145.5" cy="319" rx="13.2" ry="7.9" fill="#5ea3ad"/>
<ellipse cx="1377.5" cy="354.5" rx="17.5" ry="10.5" fill="none" stroke="#62a7b1" stroke-width="0.8"/>
<ellipse cx="1377.5" cy="354.5" rx="13.2" ry="7.9" fill="#5ea3ad"/>
<ellipse cx="1439.5" cy="488" rx="17.5" ry="10.5" fill="none" stroke="#62a7b1" stroke-width="0.8"/>
<ellipse cx="1439.5" cy="488" rx="13.2" ry="7.9" fill="#5ea3ad"/>
<ellipse cx="1270" cy="587.5" rx="17.5" ry="10.5" fill="none" stroke="#62a7b1" stroke-width="0.8"/>
<ellipse cx="1270" cy="587.5" rx="13.2" ry="7.9" fill="#5ea3ad"/>
<ellipse cx="1037.5" cy="551" rx="17.5" ry="10.5" fill="none" stroke="#62a7b1" stroke-width="0.8"/>
<ellipse cx="1037.5" cy="551" rx="13.2" ry="7.9" fill="#5ea3ad"/>
<radialGradient id="gpipe" cx="1120" cy="640" r="110" gradientUnits="userSpaceOnUse"><stop offset="0" stop-color="#78c2cc"/><stop offset="0.55" stop-color="#72bcc7"/><stop offset="1" stop-color="#64abb5"/></radialGradient>
<path d="M1030,660 C1045,650 1058,645 1064,636 C1070,605 1085,585 1108,581 C1145,576 1196,592 1214,626 C1226,652 1222,690 1204,706 C1180,722 1140,732 1110,738 L1060,752 Z" fill="url(#gpipe)"/>
<path d="M1112,724 C1150,712 1190,700 1222,680 L1224,700 C1200,716 1160,728 1120,736 Z" fill="#5fa5af" opacity="0.8"/>
<path d="M1027.5,666.9 L1069.3,642.9 L1116.2,731.1 L1074.5,755.1 Z" fill="#6ab3be"/>
<ellipse cx="1092.8" cy="687.0" rx="50" ry="29" transform="rotate(62 1092.8 687.0)" fill="#6ab3be"/>
<path d="M1034.5,662.9 A50,29 62 0 1 1081.4,751.1" fill="none" stroke="#5ea3ad" stroke-width="1.3"/>
<path d="M1035.5,662.4 A50,29 62 0 1 1082.4,750.6" fill="none" stroke="#74bdc8" stroke-width="0.8"/>
<path d="M1040.6,659.4 A50,29 62 0 1 1087.5,747.6" fill="none" stroke="#5ea3ad" stroke-width="1.3"/>
<path d="M1041.6,658.9 A50,29 62 0 1 1088.5,747.1" fill="none" stroke="#74bdc8" stroke-width="0.8"/>
<path d="M1046.7,655.9 A50,29 62 0 1 1093.6,744.1" fill="none" stroke="#5ea3ad" stroke-width="1.3"/>
<path d="M1047.7,655.4 A50,29 62 0 1 1094.6,743.6" fill="none" stroke="#74bdc8" stroke-width="0.8"/>
<path d="M1052.8,652.4 A50,29 62 0 1 1099.7,740.6" fill="none" stroke="#5ea3ad" stroke-width="1.3"/>
<path d="M1053.8,651.9 A50,29 62 0 1 1100.7,740.1" fill="none" stroke="#74bdc8" stroke-width="0.8"/>
<path d="M1058.8,648.9 A50,29 62 0 1 1105.8,737.1" fill="none" stroke="#5ea3ad" stroke-width="1.3"/>
<path d="M1059.8,648.4 A50,29 62 0 1 1106.8,736.6" fill="none" stroke="#74bdc8" stroke-width="0.8"/>
<path d="M1064.9,645.4 A50,29 62 0 1 1111.9,733.6" fill="none" stroke="#5ea3ad" stroke-width="1.3"/>
<path d="M1065.9,644.9 A50,29 62 0 1 1112.9,733.1" fill="none" stroke="#74bdc8" stroke-width="0.8"/>
<ellipse cx="1051.0" cy="711.0" rx="50" ry="29" transform="rotate(62 1051.0 711.0)" fill="#6cb5c0"/>
<ellipse cx="1053.0" cy="711.0" rx="42" ry="24.5" transform="rotate(62 1053.0 711.0)" fill="#5ea4ae"/>
<ellipse cx="1049.0" cy="713.0" rx="38.5" ry="21.5" transform="rotate(62 1049.0 713.0)" fill="#74bec9"/>
<circle cx="1187.5" cy="586.5" r="5.5" fill="none" stroke="#2a4a50" stroke-width="1"/>
</svg><svg style="left:1700px;top:100px" width="220" height="200" viewBox="1700 100 220 200">
<defs><radialGradient id="ncg" cx="1812" cy="205" r="62" gradientUnits="userSpaceOnUse"><stop offset="0" stop-color="#2b2b2b"/><stop offset="0.7" stop-color="#262626"/><stop offset="1" stop-color="#212121" stop-opacity="0"/></radialGradient></defs>
<circle cx="1812" cy="205" r="62" fill="url(#ncg)"/>
<path d="M1812.8,154.3 L1858.2,176.5 L1855.6,228.3 L1812.8,255.2 L1770.6,228.3 L1767.9,176.5 Z" fill="#202020"/>
<g fill="#9a9a9a">
<path d="M1806,136.5 L1812,129.5 L1818,136.5 Z"/>
<path d="M1806,271 L1812,278 L1818,271 Z"/>
<path d="M1745,198.5 L1737.5,204.3 L1745,210 Z"/>
<path d="M1879.5,198.5 L1887,204.3 L1879.5,210 Z"/>
</g>
<g fill="none" stroke="#8a8a8a" stroke-width="1.1">
<path d="M1777.2,143.1 A71,71 0 0 0 1751.3,169"/>
<path d="M1846.7,143.1 A71,71 0 0 1 1873.5,169"/>
</g>
<path d="M1767.9,176.5 L1812.8,154.3 L1858.2,176.5 L1812.8,200.5 Z M1773.7,173.6 L1818.7,197.4 M1773.7,179.6 L1818.7,157.2 M1807.0,157.2 L1852.3,179.6 M1807.0,197.4 L1852.3,173.6 M1767.9,176.5 L1812.8,200.5 L1812.8,255.2 L1770.6,228.3 Z M1773.7,179.6 L1776.1,231.8 M1768.3,183.2 L1812.8,207.6 M1807.0,197.4 L1807.3,251.7 M1770.2,221.6 L1812.8,248.1 M1812.8,200.5 L1858.2,176.5 L1855.6,228.3 L1812.8,255.2 Z M1818.7,197.4 L1818.4,251.7 M1812.8,207.6 L1857.9,183.2 M1852.3,179.6 L1850.0,231.8 M1812.8,248.1 L1855.9,221.6" fill="none" stroke="#4e4e4e" stroke-width="0.9"/>
<g font-family="Liberation Sans" font-size="8" fill="#8c8c8c">
<text transform="translate(1812,175) rotate(205)" text-anchor="middle">TOP</text>
<text transform="translate(1789,219) rotate(30)" text-anchor="middle">BACK</text>
<text transform="translate(1836,218) rotate(-30)" text-anchor="middle">RIGHT</text>
</g>
</svg><svg style="left:456px;top:1050px" width="1464" height="30" viewBox="456 1050 1464 30">
<path d="M462.7,1051 V1061 M469.3,1051 V1061 M475.8,1051 V1061 M482.3,1051 V1061 M495.4,1051 V1061 M501.9,1051 V1061 M508.4,1051 V1061 M515.0,1051 V1061 M528.0,1051 V1061 M534.5,1051 V1061 M541.1,1051 V1061 M547.6,1051 V1061 M560.6,1051 V1061 M567.2,1051 V1061 M573.7,1051 V1061 M580.2,1051 V1061 M593.3,1051 V1061 M599.8,1051 V1061 M606.3,1051 V1061 M612.9,1051 V1061 M625.9,1051 V1061 M632.5,1051 V1061 M639.0,1051 V1061 M645.5,1051 V1061 M658.6,1051 V1061 M665.1,1051 V1061 M671.6,1051 V1061 M678.2,1051 V1061 M691.2,1051 V1061 M697.7,1051 V1061 M704.3,1051 V1061 M710.8,1051 V1061 M723.8,1051 V1061 M730.4,1051 V1061 M736.9,1051 V1061 M743.4,1051 V1061 M756.5,1051 V1061 M763.0,1051 V1061 M769.5,1051 V1061 M776.1,1051 V1061 M789.1,1051 V1061 M795.7,1051 V1061 M802.2,1051 V1061 M808.7,1051 V1061 M821.8,1051 V1061 M828.3,1051 V1061 M834.8,1051 V1061 M841.4,1051 V1061 M854.4,1051 V1061 M860.9,1051 V1061 M867.5,1051 V1061 M874.0,1051 V1061 M887.0,1051 V1061 M893.6,1051 V1061 M900.1,1051 V1061 M906.6,1051 V1061 M919.7,1051 V1061 M926.2,1051 V1061 M932.7,1051 V1061 M939.3,1051 V1061 M952.3,1051 V1061 M958.9,1051 V1061 M965.4,1051 V1061 M971.9,1051 V1061 M985.0,1051 V1061 M991.5,1051 V1061 M998.0,1051 V1061 M1004.6,1051 V1061 M1017.6,1051 V1061 M1024.1,1051 V1061 M1030.7,1051 V1061 M1037.2,1051 V1061 M1050.2,1051 V1061 M1056.8,1051 V1061 M1063.3,1051 V1061 M1069.8,1051 V1061 M1082.9,1051 V1061 M1089.4,1051 V1061 M1095.9,1051 V1061 M1102.5,1051 V1061 M1115.5,1051 V1061 M1122.1,1051 V1061 M1128.6,1051 V1061 M1135.1,1051 V1061 M1148.2,1051 V1061 M1154.7,1051 V1061 M1161.2,1051 V1061 M1167.8,1051 V1061 M1180.8,1051 V1061 M1187.3,1051 V1061 M1193.9,1051 V1061 M1200.4,1051 V1061 M1213.4,1051 V1061 M1220.0,1051 V1061 M1226.5,1051 V1061 M1233.0,1051 V1061 M1246.1,1051 V1061 M1252.6,1051 V1061 M1259.1,1051 V1061 M1265.7,1051 V1061 M1278.7,1051 V1061 M1285.3,1051 V1061 M1291.8,1051 V1061 M1298.3,1051 V1061 M1311.4,1051 V1061 M1317.9,1051 V1061 M1324.4,1051 V1061 M1331.0,1051 V1061 M1344.0,1051 V1061 M1350.5,1051 V1061 M1357.1,1051 V1061 M1363.6,1051 V1061 M1376.6,1051 V1061 M1383.2,1051 V1061 M1389.7,1051 V1061 M1396.2,1051 V1061 M1409.3,1051 V1061 M1415.8,1051 V1061 M1422.3,1051 V1061 M1428.9,1051 V1061 M1441.9,1051 V1061 M1448.5,1051 V1061 M1455.0,1051 V1061 M1461.5,1051 V1061 M1474.6,1051 V1061 M1481.1,1051 V1061 M1487.6,1051 V1061 M1494.2,1051 V1061 M1507.2,1051 V1061 M1513.7,1051 V1061 M1520.3,1051 V1061 M1526.8,1051 V1061 M1539.8,1051 V1061 M1546.4,1051 V1061 M1552.9,1051 V1061 M1559.4,1051 V1061 M1572.5,1051 V1061 M1579.0,1051 V1061 M1585.5,1051 V1061 M1592.1,1051 V1061 M1605.1,1051 V1061 M1611.7,1051 V1061 M1618.2,1051 V1061 M1624.7,1051 V1061 M1637.8,1051 V1061 M1644.3,1051 V1061 M1650.8,1051 V1061 M1657.4,1051 V1061 M1670.4,1051 V1061 M1676.9,1051 V1061 M1683.5,1051 V1061 M1690.0,1051 V1061 M1703.0,1051 V1061 M1709.6,1051 V1061 M1716.1,1051 V1061 M1722.6,1051 V1061 M1735.7,1051 V1061 M1742.2,1051 V1061 M1748.7,1051 V1061 M1755.3,1051 V1061 M1768.3,1051 V1061 M1774.9,1051 V1061 M1781.4,1051 V1061 M1787.9,1051 V1061 M1801.0,1051 V1061 M1807.5,1051 V1061 M1814.0,1051 V1061 M1820.6,1051 V1061 M1833.6,1051 V1061 M1840.1,1051 V1061 M1846.7,1051 V1061 M1853.2,1051 V1061 M1866.2,1051 V1061 M1872.8,1051 V1061 M1879.3,1051 V1061 M1885.8,1051 V1061 M1898.9,1051 V1061 M1905.4,1051 V1061 M1911.9,1051 V1061 M1918.5,1051 V1061" stroke="#5f5f5f" stroke-width="1" fill="none"/>
<path d="M456.2,1051 V1066 M488.8,1051 V1066 M521.5,1051 V1066 M554.1,1051 V1066 M586.8,1051 V1066 M619.4,1051 V1066 M652.0,1051 V1066 M684.7,1051 V1066 M717.3,1051 V1066 M750.0,1051 V1066 M782.6,1051 V1066 M815.2,1051 V1066 M847.9,1051 V1066 M880.5,1051 V1066 M913.2,1051 V1066 M945.8,1051 V1066 M978.4,1051 V1066 M1011.1,1051 V1066 M1043.7,1051 V1066 M1076.4,1051 V1066 M1109.0,1051 V1066 M1141.6,1051 V1066 M1174.3,1051 V1066 M1206.9,1051 V1066 M1239.6,1051 V1066 M1272.2,1051 V1066 M1304.8,1051 V1066 M1337.5,1051 V1066 M1370.1,1051 V1066 M1402.8,1051 V1066 M1435.4,1051 V1066 M1468.0,1051 V1066 M1500.7,1051 V1066 M1533.3,1051 V1066 M1566.0,1051 V1066 M1598.6,1051 V1066 M1631.2,1051 V1066 M1663.9,1051 V1066 M1696.5,1051 V1066 M1729.2,1051 V1066 M1761.8,1051 V1066 M1794.4,1051 V1066 M1827.1,1051 V1066 M1859.7,1051 V1066 M1892.4,1051 V1066" stroke="#7c7c7c" stroke-width="1" fill="none"/>
<rect x="1880" y="1068" width="40" height="12" fill="#b4d8e0"/>
<g font-family="Liberation Sans" font-size="10" font-weight="700" fill="#262626"><text x="488.8" y="1077.3" text-anchor="middle">10</text><text x="521.5" y="1077.3" text-anchor="middle">20</text><text x="554.1" y="1077.3" text-anchor="middle">30</text><text x="586.8" y="1077.3" text-anchor="middle">40</text><text x="619.4" y="1077.3" text-anchor="middle">50</text><text x="652.0" y="1077.3" text-anchor="middle">60</text><text x="684.7" y="1077.3" text-anchor="middle">70</text><text x="717.3" y="1077.3" text-anchor="middle">80</text><text x="750.0" y="1077.3" text-anchor="middle">90</text><text x="782.6" y="1077.3" text-anchor="middle">100</text><text x="815.2" y="1077.3" text-anchor="middle">110</text><text x="847.9" y="1077.3" text-anchor="middle">120</text><text x="880.5" y="1077.3" text-anchor="middle">130</text><text x="913.2" y="1077.3" text-anchor="middle">140</text><text x="945.8" y="1077.3" text-anchor="middle">150</text><text x="978.4" y="1077.3" text-anchor="middle">160</text><text x="1011.1" y="1077.3" text-anchor="middle">170</text><text x="1043.7" y="1077.3" text-anchor="middle">180</text><text x="1076.4" y="1077.3" text-anchor="middle">190</text><text x="1109.0" y="1077.3" text-anchor="middle">200</text><text x="1141.6" y="1077.3" text-anchor="middle">210</text><text x="1174.3" y="1077.3" text-anchor="middle">220</text><text x="1206.9" y="1077.3" text-anchor="middle">230</text><text x="1239.6" y="1077.3" text-anchor="middle">240</text><text x="1272.2" y="1077.3" text-anchor="middle">250</text><text x="1304.8" y="1077.3" text-anchor="middle">260</text><text x="1337.5" y="1077.3" text-anchor="middle">270</text><text x="1370.1" y="1077.3" text-anchor="middle">280</text><text x="1402.8" y="1077.3" text-anchor="middle">290</text><text x="1435.4" y="1077.3" text-anchor="middle">300</text><text x="1468.0" y="1077.3" text-anchor="middle">310</text><text x="1500.7" y="1077.3" text-anchor="middle">320</text><text x="1533.3" y="1077.3" text-anchor="middle">330</text><text x="1566.0" y="1077.3" text-anchor="middle">340</text><text x="1598.6" y="1077.3" text-anchor="middle">350</text><text x="1631.2" y="1077.3" text-anchor="middle">360</text><text x="1663.9" y="1077.3" text-anchor="middle">370</text><text x="1696.5" y="1077.3" text-anchor="middle">380</text><text x="1729.2" y="1077.3" text-anchor="middle">390</text><text x="1761.8" y="1077.3" text-anchor="middle">400</text><text x="1794.4" y="1077.3" text-anchor="middle">410</text><text x="1827.1" y="1077.3" text-anchor="middle">420</text><text x="1859.7" y="1077.3" text-anchor="middle">430</text></g>
<text x="1902" y="1078.5" text-anchor="middle" font-family="Liberation Sans" font-size="10.5" font-weight="700" fill="#3a8a96">mm</text>
</svg><div class="t" style="left:28px;top:38.14px;font-size:27px;line-height:27px;color:#cfcfcf;font-weight:400;letter-spacing:0.2px">fixture<span style="color:#6ab4bf">mate</span></div>
<div class="t" style="left:373.5px;top:41.93px;font-size:11.3px;line-height:11.3px;color:#9c9c9c;font-weight:400;">Session</div>
<div class="t" style="left:736px;top:41.34px;font-size:12px;line-height:12px;color:#9c9c9c;font-weight:400;">View</div>
<div class="t" style="left:1212px;top:41.93px;font-size:11.3px;line-height:11.3px;color:#9c9c9c;font-weight:400;">State</div>
<div class="t" style="left:1519px;top:41.34px;font-size:12px;line-height:12px;color:#9c9c9c;font-weight:400;">Support</div>
<div class="t" style="left:1801px;top:41.34px;font-size:12px;line-height:12px;color:#9c9c9c;font-weight:400;">Settings</div>
<div class="t" style="left:109px;top:130.73px;font-size:14.5px;line-height:14.5px;color:#e2e2e2;font-weight:400;">Import Workpieces</div>
<div class="t" style="left:109px;top:254.93px;font-size:11.9px;line-height:11.9px;color:#bdbdbd;font-weight:400;">Recommended formats: .STL</div>
<div class="t" style="left:109px;top:269.93px;font-size:11.9px;line-height:11.9px;color:#bdbdbd;font-weight:400;">Other supported formats: .STP, .STEP, .3MF</div>
<div class="t" style="left:109px;top:284.93px;font-size:11.9px;line-height:11.9px;color:#bdbdbd;font-weight:400;">(Internally converted to .STL)</div>
<div class="t" style="left:109px;top:314.76px;font-size:12.1px;line-height:12.1px;color:#bdbdbd;font-weight:400;">Note:</div>
<div class="t" style="left:109px;top:329.76px;font-size:12.1px;line-height:12.1px;color:#bdbdbd;font-weight:400;">Total uploads are limited to 100MB per session. Files larger</div>
<div class="t" style="left:109px;top:344.76px;font-size:12.1px;line-height:12.1px;color:#bdbdbd;font-weight:400;">than 5MB are automatically optimized by fixturemate to</div>
<div class="t" style="left:109px;top:359.76px;font-size:12.1px;line-height:12.1px;color:#bdbdbd;font-weight:400;">enhance performance.</div>
<div class="abs" style="left:109px;top:405px;width:150px;height:44px;background:#2e2e2e;border-radius:5px"></div><div class="t" style="left:167.5px;top:421.84px;font-size:12px;line-height:12px;color:#c9d2d2;font-weight:400;">Import</div>
<div class="t" style="left:109px;top:517.48px;font-size:14.2px;line-height:14.2px;color:#e2e2e2;font-weight:400;">Workpieces</div>
<div class="t" style="left:109px;top:577.84px;font-size:12px;line-height:12px;color:#cfcfcf;font-weight:400;">1</div>
<div class="t" style="left:136.7px;top:577.84px;font-size:12px;line-height:12px;color:#cfcfcf;font-weight:400;">Air-pump-housing.stl</div>
<div class="t" style="left:133px;top:624.84px;font-size:12px;line-height:12px;color:#c8c8c8;font-weight:400;">Absolute Position X</div>
<div class="t" style="right:1497px;top:624.84px;font-size:12px;line-height:12px;color:#c8c8c8;font-weight:400;">122.7 mm</div>
<div class="t" style="left:133px;top:661.84px;font-size:12px;line-height:12px;color:#c8c8c8;font-weight:400;">Absolute Position Y</div>
<div class="t" style="right:1497px;top:661.84px;font-size:12px;line-height:12px;color:#c8c8c8;font-weight:400;">12.5 mm</div>
<div class="t" style="left:133px;top:698.84px;font-size:12px;line-height:12px;color:#c8c8c8;font-weight:400;">Absolute Position Z</div>
<div class="t" style="right:1497px;top:698.84px;font-size:12px;line-height:12px;color:#c8c8c8;font-weight:400;">93.2 mm</div>
<div class="t" style="left:133px;top:735.84px;font-size:12px;line-height:12px;color:#e48a80;font-weight:400;">Incremental Rotation X</div>
<div class="t" style="right:1497px;top:735.84px;font-size:12px;line-height:12px;color:#e48a80;font-weight:400;">0.0 deg</div>
<div class="t" style="left:133px;top:772.84px;font-size:12px;line-height:12px;color:#6cc46c;font-weight:400;">Incremental Rotation Y</div>
<div class="t" style="right:1497px;top:772.84px;font-size:12px;line-height:12px;color:#6cc46c;font-weight:400;">0.0 deg</div>
<div class="t" style="left:133px;top:809.84px;font-size:12px;line-height:12px;color:#b0b0f4;font-weight:400;">Incremental Rotation Z</div>
<div class="t" style="right:1497px;top:809.84px;font-size:12px;line-height:12px;color:#b0b0f4;font-weight:400;">0.0 deg</div>
<div class="abs" style="left:109px;top:612px;width:326px;height:1px;background-image:linear-gradient(90deg,#3c3c3c 60%,transparent 60%);background-size:5px 1px"></div><div class="abs" style="left:109px;top:649px;width:326px;height:1px;background-image:linear-gradient(90deg,#3c3c3c 60%,transparent 60%);background-size:5px 1px"></div><div class="abs" style="left:109px;top:686px;width:326px;height:1px;background-image:linear-gradient(90deg,#3c3c3c 60%,transparent 60%);background-size:5px 1px"></div><div class="abs" style="left:109px;top:723px;width:326px;height:1px;background-image:linear-gradient(90deg,#3c3c3c 60%,transparent 60%);background-size:5px 1px"></div><div class="abs" style="left:109px;top:760px;width:326px;height:1px;background-image:linear-gradient(90deg,#3c3c3c 60%,transparent 60%);background-size:5px 1px"></div><div class="abs" style="left:109px;top:797px;width:326px;height:1px;background-image:linear-gradient(90deg,#3c3c3c 60%,transparent 60%);background-size:5px 1px"></div><div class="abs" style="left:109px;top:834px;width:326px;height:1px;background-image:linear-gradient(90deg,#3c3c3c 60%,transparent 60%);background-size:5px 1px"></div><div class="t" style="left:588px;top:976.93px;font-size:11.9px;line-height:11.9px;color:#e6e6e6;font-weight:700;">Total dimensions</div>
<div class="t" style="left:588px;top:1002.34px;font-size:12px;line-height:12px;color:#d0d0d0;font-weight:400;"><span style="color:#e07070">X</span> 119.0 mm <span style="color:#5cae5c">Y</span> 149.3 mm <span style="color:#a0a0f0">Z</span> 75.0 mm</div>
<div class="t" style="left:825px;top:976.93px;font-size:11.9px;line-height:11.9px;color:#e6e6e6;font-weight:700;">Height (3d-printed)</div>
<div class="t" style="left:825px;top:1002.34px;font-size:12px;line-height:12px;color:#d0d0d0;font-weight:400;"><span style="color:#a0a0f0">Z</span> 0.0 mm</div>
<div class="t" style="left:978px;top:976.93px;font-size:11.9px;line-height:11.9px;color:#e6e6e6;font-weight:700;">Volume (3d-printed)</div>
<div class="t" style="left:978px;top:1002.34px;font-size:12px;line-height:12px;color:#d0d0d0;font-weight:400;">0.00 cm<span style="font-size:8px;position:relative;top:-5px">3</span></div>
<div class="t" style="left:1137px;top:976.93px;font-size:11.9px;line-height:11.9px;color:#e6e6e6;font-weight:700;">Workpieces</div>
<div class="t" style="left:1137px;top:1002.34px;font-size:12px;line-height:12px;color:#d0d0d0;font-weight:400;">1</div>
<div class="t" style="left:27px;top:1060.34px;font-size:12px;line-height:12px;color:#d8d8d8;font-weight:400;">v2.3.2</div>
<div class="t" style="left:1689px;top:107.89px;font-size:8.4px;line-height:8.4px;color:#4e4e4e;font-weight:400;">SessionID: 5fde5992-467e-4aa3-ab53-acfd66830829</div>

</body></html>
